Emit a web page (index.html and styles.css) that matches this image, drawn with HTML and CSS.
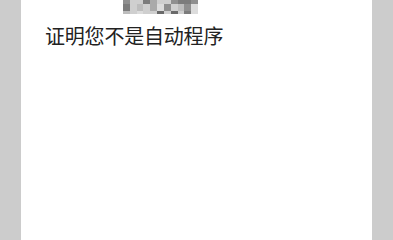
FILE: index.html
```html
<!DOCTYPE html>
<html lang="zh-CN">
<head>
<meta charset="utf-8">
<link rel="stylesheet" href="styles.css">
</head>
<body>
<main class="panel">
  <div class="mosaic" aria-hidden="true">
    <span class="c5"></span><span class="c2"></span><span class="c2"></span><span class="c6"></span><span class="c4"></span><span class="c2"></span><span class="c2"></span><span class="c5"></span><span class="c6"></span><span class="c6"></span><span class="c5"></span>
    <span class="c6"></span><span class="c2"></span><span class="c3"></span><span class="c2"></span><span class="c4"></span><span class="c1"></span><span class="c5"></span><span class="c2"></span><span class="c3"></span><span class="c5"></span><span class="c1"></span>
    <span class="c3"></span><span class="c2"></span><span class="c1"></span><span class="c2"></span><span class="c2"></span><span class="c7"></span><span class="c2"></span><span class="c7"></span><span class="c2"></span><span class="c6"></span><span class="c1"></span>
  </div>
  <h1 class="title">证明您不是自动程序</h1>
</main>
</body>
</html>
```
FILE: styles.css
```css
html, body {
  margin: 0;
  padding: 0;
  height: 100%;
}
body {
  background: #cccccc;
}
.panel {
  background: #ffffff;
  margin: 0 21px;
  height: 100%;
  padding: 0 24px;
  box-sizing: border-box;
}
.mosaic {
  display: grid;
  grid-template-columns: repeat(11, 1fr);
  grid-template-rows: 4px 7px 3px;
  width: 75px;
  height: 14px;
  margin-left: 78px;
  filter: blur(0.4px);
}
.mosaic span { display: block; }
.c1 { background: #dcdcdc; }
.c2 { background: #cfcfcf; }
.c3 { background: #bdbdbd; }
.c4 { background: #aaaaaa; }
.c5 { background: #8f8f8f; }
.c6 { background: #7c7c7c; }
.c7 { background: #6a6a6a; }
.title {
  margin: 8px 0 0;
  font-family: "Noto Sans CJK SC", "Noto Sans", sans-serif;
  font-weight: 400;
  font-size: 20px;
  line-height: 28px;
  color: #222222;
  letter-spacing: -0.2px;
}
```
